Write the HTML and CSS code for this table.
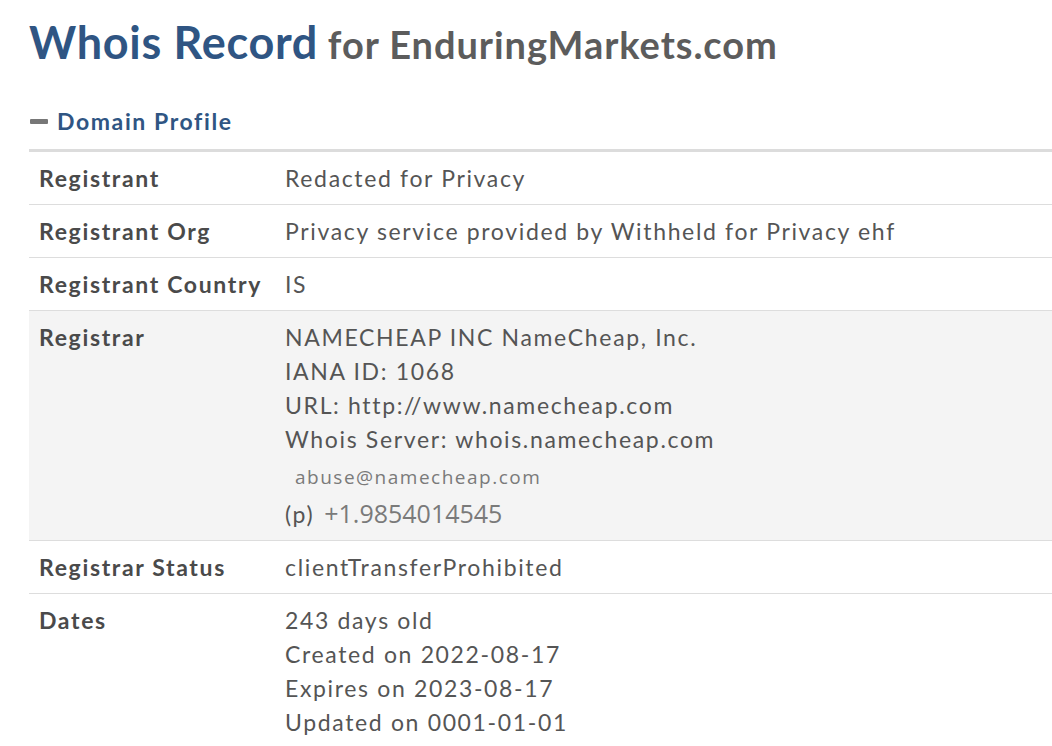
FILE: index.html
```html
<!DOCTYPE html>
<html>
<head>
<meta charset="utf-8">
<link rel="stylesheet" href="styles.css">
</head>
<body>
<div class="page">
  <h1 class="title"><span class="title-main">Whois Record</span> <span class="title-sub">for EnduringMarkets.com</span></h1>
  <h2 class="section"><span class="minus"></span>Domain Profile</h2>
  <div class="records">
    <div class="row">
      <div class="label">Registrant</div>
      <div class="value">Redacted for Privacy</div>
    </div>
    <div class="row">
      <div class="label">Registrant Org</div>
      <div class="value">Privacy service provided by Withheld for Privacy ehf</div>
    </div>
    <div class="row">
      <div class="label">Registrant Country</div>
      <div class="value">IS</div>
    </div>
    <div class="row shaded">
      <div class="label">Registrar</div>
      <div class="value">
        <div>NAMECHEAP INC NameCheap, Inc.</div>
        <div>IANA ID: 1068</div>
        <div>URL: http://www.namecheap.com</div>
        <div>Whois Server: whois.namecheap.com</div>
        <div class="email"><span class="img-text">abuse@namecheap.com</span></div>
        <div class="phone">(p)<span class="img-text phone-num">+1.9854014545</span></div>
      </div>
    </div>
    <div class="row">
      <div class="label">Registrar Status</div>
      <div class="value">clientTransferProhibited</div>
    </div>
    <div class="row">
      <div class="label">Dates</div>
      <div class="value">
        <div>243 days old</div>
        <div>Created on 2022-08-17</div>
        <div>Expires on 2023-08-17</div>
        <div>Updated on 0001-01-01</div>
      </div>
    </div>
  </div>
</div>
</body>
</html>
```

FILE: styles.css
```css
html, body {
  margin: 0;
  padding: 0;
  background: #ffffff;
  overflow: hidden;
}
body {
  font-family: Lato, "Open Sans", sans-serif;
  color: #555555;
}
.page {
  padding: 10px 0 0 29px;
}
.title {
  margin: 0;
  font-weight: 700;
  line-height: 64px;
  white-space: nowrap;
}
.title-main {
  font-size: 45px;
  color: #2f5583;
  letter-spacing: 0.7px;
}
.title-sub {
  font-size: 38px;
  color: #5c5c5c;
  letter-spacing: 0.95px;
  margin-left: 2px;
}
.section {
  margin: 27px 0 0 0;
  font-size: 23px;
  font-weight: 700;
  color: #2f5583;
  line-height: 30px;
  display: flex;
  align-items: center;
  letter-spacing: 1.6px;
}
.minus {
  display: inline-block;
  width: 18px;
  height: 5px;
  background: #777777;
  border-radius: 1px;
  margin: 0 9px 0 1px;
}
.records {
  margin-top: 13px;
  border-top: 3px solid #dcdcdc;
}
.row {
  display: grid;
  grid-template-columns: 256px 1fr;
  border-bottom: 1px solid #dddddd;
  font-size: 23px;
  line-height: 34px;
  letter-spacing: 1.65px;
}
.row.shaded {
  background: #f4f4f4;
}
.label {
  padding: 9px 10px;
  font-weight: 700;
  color: #4a4a4a;
}
.value {
  padding: 9px 0;
  color: #555555;
}
.img-text {
  font-family: "Open Sans", "DejaVu Sans", sans-serif;
  font-size: 19px;
  letter-spacing: 1.5px;
  color: #7a7a7a;
}
.email {
  line-height: 37px;
  padding-left: 10px;
  padding-top: 1px;
}
.phone {
  line-height: 34px;
}
.phone-num {
  font-size: 25px;
  letter-spacing: 0;
  margin-left: 10px;
}
```
